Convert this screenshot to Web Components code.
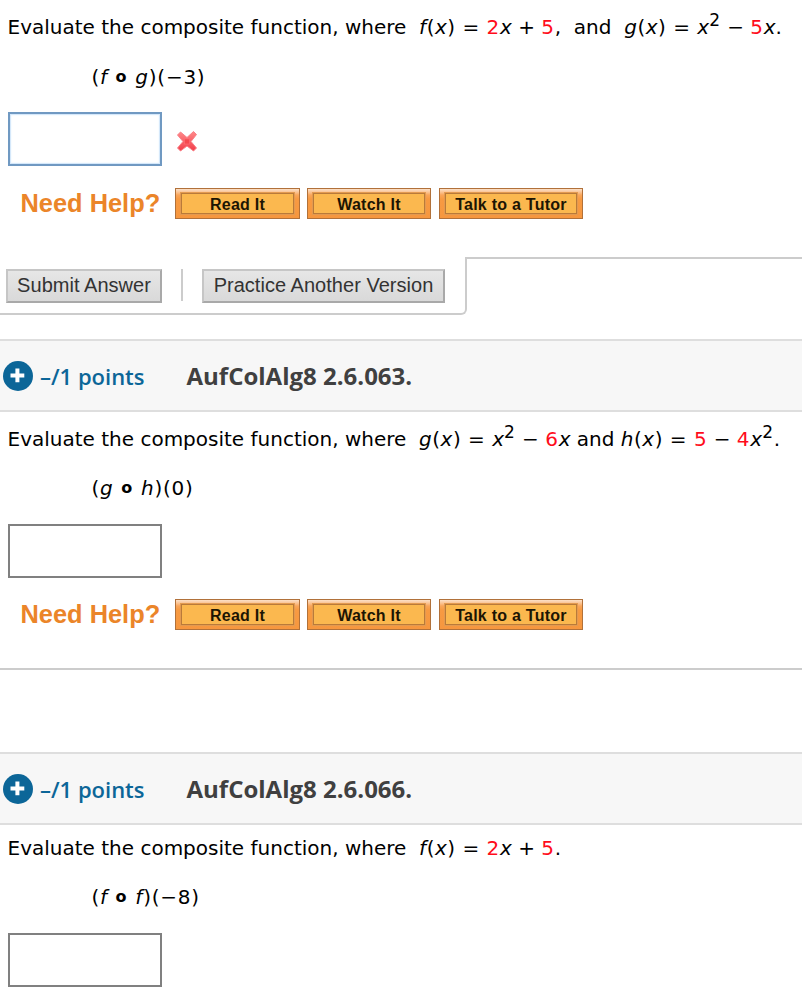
<!DOCTYPE html>
<html lang="en">
<head>
<meta charset="utf-8">
<title>Homework</title>
<style>
    body {
        margin: 0;
        background: #fff;
        color: #000;
        font-family: "DejaVu Sans", Verdana, sans-serif;
        font-size: 20px;
        overflow: hidden;
    }
</style>
</head>
<body>
<homework-page></homework-page>

<script>
class MathLine extends HTMLElement {
    constructor() {
        super();
        const shadow = this.attachShadow({ mode: 'open' });
        shadow.innerHTML = `
            <style>
                :host {
                    display: block;
                    height: 24px;
                    line-height: 24px;
                    white-space: nowrap;
                    padding-left: 7.5px;
                }
                :host([indent]) {
                    padding-left: 91.5px;
                    margin-top: 26px;
                    letter-spacing: .75px;
                }
                ::slotted(b) {
                    font-weight: normal;
                    color: #ff0c1b;
                    letter-spacing: .7px;
                }
                ::slotted(.fn) {
                    letter-spacing: .5px;
                }
                ::slotted(sup) {
                    font-size: 17px;
                    line-height: 0;
                    vertical-align: 8px;
                    letter-spacing: .8px;
                }
                ::slotted(.ring) {
                    margin: 0 1px 0 .5px;
                    font-size: 16px;
                    font-weight: bold;
                    line-height: 0;
                    vertical-align: 2px;
                }
            </style>
            <slot></slot>
        `;
    }
}

class AnswerBox extends HTMLElement {
    constructor() {
        super();
        const shadow = this.attachShadow({ mode: 'open' });
        shadow.innerHTML = `
            <style>
                :host {
                    display: flex;
                    align-items: center;
                    gap: 14px;
                    height: 54px;
                    margin: 23px 0 0 8px;
                }
                .field {
                    box-sizing: border-box;
                    width: 154px;
                    height: 54px;
                    border: 2px solid #808080;
                    background: #fff;
                }
                :host([wrong]) .field {
                    border-color: #7099c2;
                    box-shadow: inset 0 0 0 1px #d5e8fa, inset 0 0 2px 1px #e4f1fd;
                }
                svg {
                    display: none;
                    margin-top: 5px;
                }
                :host([wrong]) svg {
                    display: block;
                }
            </style>
            <div class="field"></div>
            <svg width="22" height="22" viewBox="0 0 22 22">
                <defs>
                    <linearGradient id="red" x1="0" y1="0" x2="0" y2="1">
                        <stop offset="0" stop-color="#ff8a8a"/>
                        <stop offset="1" stop-color="#f23c48"/>
                    </linearGradient>
                </defs>
                <path d="M4.5 1 L11 6.5 L17.5 .5 L20.5 3.5 L15 10.5 L20.5 17 L17.5 20 L11 15 L4.5 20 L1.5 17 L7 10.5 L1.5 4 Z"
                    fill="url(#red)" stroke="#f98088" stroke-width="1" stroke-linejoin="round"/>
                <rect x="8.5" y="8" width="5" height="5" fill="#f5484f" stroke="#ff7077" stroke-width=".6"/>
            </svg>
        `;
    }
}

class HelpButton extends HTMLElement {
    constructor() {
        super();
        const shadow = this.attachShadow({ mode: 'open' });
        shadow.innerHTML = `
            <style>
                :host {
                    display: block;
                    box-sizing: border-box;
                    height: 31px;
                    padding: 4px 5px;
                    border: 1px solid #b1713a;
                    background: linear-gradient(#fbe0c8 0, #fbc596 3px, #f9a65a 6px, #f79a42 10px, #f6973f);
                }
                .face {
                    box-sizing: border-box;
                    height: 21px;
                    border: 1px solid #b97a3a;
                    box-shadow: 0 0 0 1px #e39a50;
                    background: #fbb84f;
                    color: #1c1503;
                    font: bold 16px/21px "Liberation Sans", Arial, sans-serif;
                    letter-spacing: .25px;
                    text-align: center;
                    white-space: nowrap;
                }
            </style>
            <div class="face"><slot></slot></div>
        `;
    }
}

class NeedHelp extends HTMLElement {
    constructor() {
        super();
        const shadow = this.attachShadow({ mode: 'open' });
        shadow.innerHTML = `
            <style>
                :host {
                    display: grid;
                    grid-template-columns: 148px 125px 124px 144px;
                    column-gap: 7px;
                    height: 31px;
                    margin: 22px 0 0 20px;
                }
                .label {
                    padding-left: .5px;
                    color: #eb8529;
                    font: bold 25.4px/30px "Liberation Sans", Arial, sans-serif;
                    white-space: nowrap;
                }
                .tutor {
                    margin-left: 1px;
                    margin-right: -1px;
                }
            </style>
            <div class="label">Need Help?</div>
            <help-button>Read It</help-button>
            <help-button>Watch It</help-button>
            <help-button class="tutor">Talk to a Tutor</help-button>
        `;
    }
}

class SubmitBar extends HTMLElement {
    constructor() {
        super();
        const shadow = this.attachShadow({ mode: 'open' });
        shadow.innerHTML = `
            <style>
                :host {
                    display: flex;
                    height: 58px;
                    margin-top: 38px;
                }
                .tab {
                    box-sizing: border-box;
                    display: flex;
                    width: 467px;
                    padding: 12px 0 0 6px;
                    border-right: 2px solid #ccc;
                    border-bottom: 2px solid #ccc;
                    border-bottom-right-radius: 6px;
                }
                .rest {
                    flex: 1;
                    margin-left: -2px;
                    height: 2px;
                    background: #ccc;
                }
                .button {
                    box-sizing: border-box;
                    height: 34px;
                    border: 2px solid;
                    border-color: #c6c6c6 #a9a9a9 #a9a9a9 #c6c6c6;
                    background: linear-gradient(#e6e6e6, #d9d9d9);
                    color: #333;
                    font: 20px/29px "Liberation Sans", Arial, sans-serif;
                    letter-spacing: .03px;
                    text-align: center;
                    white-space: nowrap;
                }
                .submit { width: 156px; }
                .practice { width: 243px; }
                .divider {
                    width: 2px;
                    height: 32px;
                    margin: 0 20px 0 19px;
                    background: #ccc;
                }
                .practice { margin-left: -1px; }
            </style>
            <div class="tab">
                <div class="button submit">Submit Answer</div>
                <div class="divider"></div>
                <div class="button practice">Practice Another Version</div>
            </div>
            <div class="rest"></div>
        `;
    }
}

class QuestionHeader extends HTMLElement {
    constructor() {
        super();
        const shadow = this.attachShadow({ mode: 'open' });
        shadow.innerHTML = `
            <style>
                :host {
                    display: flex;
                    align-items: center;
                    box-sizing: border-box;
                    height: 73px;
                    padding-left: 3px;
                    border-top: 2px solid #dedede;
                    border-bottom: 2px solid #dedede;
                    background: #f7f7f7;
                    font-family: "Open Sans", sans-serif;
                    white-space: nowrap;
                }
                .points {
                    width: 146.5px;
                    margin: 0 0 0 7px;
                    color: #0c6698;
                    font-size: 22px;
                    font-weight: 600;
                }
                .name {
                    color: #404040;
                    font-size: 24px;
                    font-weight: 700;
                }
            </style>
            <svg width="30" height="30" viewBox="0 0 30 30">
                <circle cx="15" cy="15" r="15" fill="#0c6698"/>
                <path d="M14.4 7.5v13.8M7.5 14.4h13.8" stroke="#fff" stroke-width="4"/>
            </svg>
            <span class="points">–/1 points</span>
            <span class="name"><slot></slot></span>
        `;
    }
}

class HomeworkPage extends HTMLElement {
    constructor() {
        super();
        const shadow = this.attachShadow({ mode: 'open' });
        shadow.innerHTML = `
            <style>
                :host {
                    display: block;
                    height: 996px;
                    overflow: hidden;
                }
                section {
                    box-sizing: border-box;
                    display: flow-root;
                }
                .first { height: 339px; padding-top: 15px; }
                .second {
                    height: 258px;
                    padding-top: 15px;
                    border-bottom: 2px solid #ccc;
                    margin-bottom: 82px;
                }
                .third { padding-top: 11px; }
                .second math-line[indent], .third math-line[indent] { margin-top: 25px; }
                .second answer-box, .third answer-box { margin-top: 24px; }
                .second need-help { margin-top: 21px; }
            </style>
            <section class="first">
                <math-line>Evaluate the composite function, where&nbsp; <span class="fn"><i>f</i>(<i>x</i>) = </span><b>2</b><i>x</i> + <b>5</b>,&nbsp; and&nbsp; <span class="fn"><i>g</i>(<i>x</i>) = </span><i>x</i><sup>2</sup> − <b>5</b><i>x</i>.</math-line>
                <math-line indent>(<i>f</i> <span class="ring">o</span> <i>g</i>)(−3)</math-line>
                <answer-box wrong></answer-box>
                <need-help></need-help>
                <submit-bar></submit-bar>
            </section>
            <question-header>AufColAlg8 2.6.063.</question-header>
            <section class="second">
                <math-line>Evaluate the composite function, where&nbsp; <span class="fn"><i>g</i>(<i>x</i>) = </span><i>x</i><sup>2</sup> − <b>6</b><i>x</i> and <span class="fn"><i>h</i>(<i>x</i>) = </span><b>5</b> − <b>4</b><i>x</i><sup>2</sup>.</math-line>
                <math-line indent>(<i>g</i> <span class="ring">o</span> <i>h</i>)(0)</math-line>
                <answer-box></answer-box>
                <need-help></need-help>
            </section>
            <question-header>AufColAlg8 2.6.066.</question-header>
            <section class="third">
                <math-line>Evaluate the composite function, where&nbsp; <span class="fn"><i>f</i>(<i>x</i>) = </span><b>2</b><i>x</i> + <b>5</b>.</math-line>
                <math-line indent>(<i>f</i> <span class="ring">o</span> <i>f</i>)(−8)</math-line>
                <answer-box></answer-box>
            </section>
        `;
    }
}

customElements.define('math-line', MathLine);
customElements.define('answer-box', AnswerBox);
customElements.define('help-button', HelpButton);
customElements.define('need-help', NeedHelp);
customElements.define('submit-bar', SubmitBar);
customElements.define('question-header', QuestionHeader);
customElements.define('homework-page', HomeworkPage);
</script>
</body>
</html>
